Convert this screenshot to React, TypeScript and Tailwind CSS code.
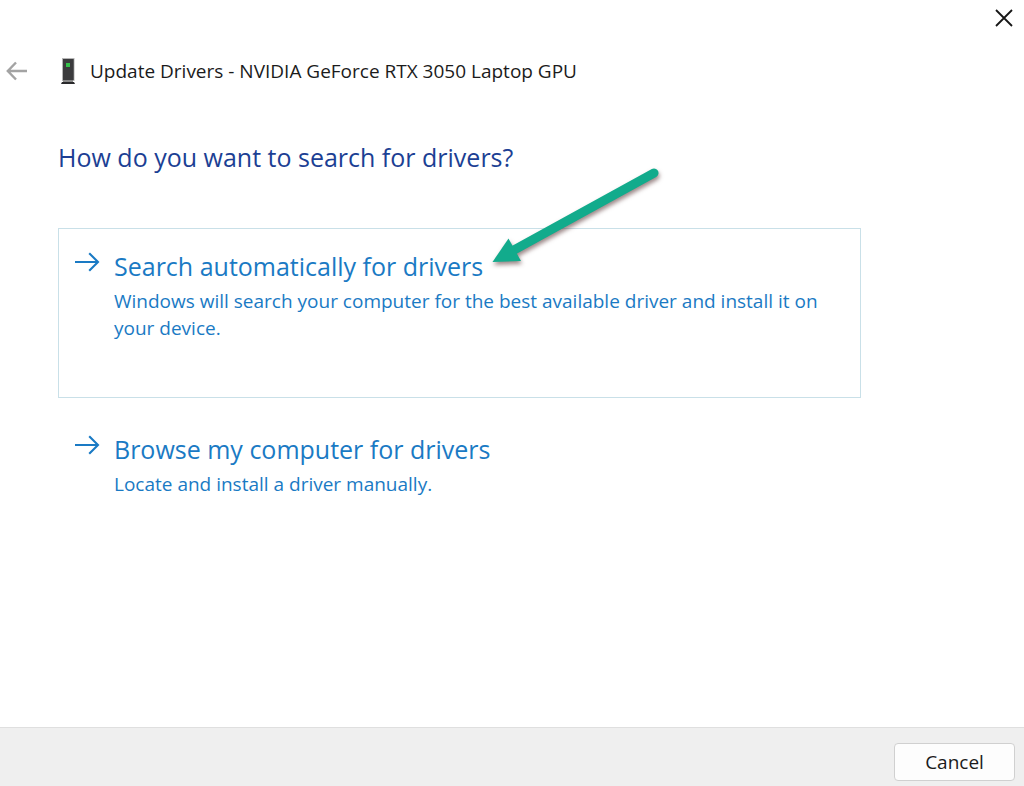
import React from "react";

function CommandArrow() {
  return (
    <svg className="mt-[5px] h-[22px] w-[26px] shrink-0" viewBox="0 0 26 22" fill="none" stroke="#1a7ac4" strokeWidth="2.1" aria-hidden="true">
      <path d="M1 11H24M15.2 2.200L24 11L15.200 19.800" />
    </svg>
  );
}

function DeviceIcon() {
  return (
    <svg className="h-[28px] w-[16px] shrink-0" viewBox="0 0 16 28" aria-hidden="true">
      <rect x="2" y="1" width="12.500" height="23" fill="#b5b5b5" />
      <rect x="3" y="2" width="10.700" height="21" fill="#3b3b3d" />
      <rect x="6" y="6" width="4" height="4" fill="#35c04a" />
      <rect x="3" y="23" width="10" height="2" fill="#888" />
      <path d="M2 25H14L15 27H1Z" fill="#29292b" />
    </svg>
  );
}

function CommandLink({ title, text, framed }: { title: string; text: string; framed?: boolean }) {
  return (
    <button
      type="button"
      className={
        framed
          ? "flex min-h-[170px] w-full items-start gap-[14px] border border-[#c9e0e8] px-[15px] pt-[17px] text-left text-[#1a7ac4]"
          : "flex w-full items-start gap-[14px] border border-transparent px-[15px] pt-[17px] text-left text-[#1a7ac4]"
      }
    >
      <CommandArrow />
      <span className="flex min-w-0 flex-col gap-[2px]">
        <span className="text-[25px] leading-[40px]">{title}</span>
        <span className="text-[19px] leading-[27px]">{text}</span>
      </span>
    </button>
  );
}

function PointerArrow() {
  return (
    <svg
      className="pointer-events-none absolute -top-[63px] left-[430px] h-[110px] w-[180px] drop-shadow-[1px_3px_2px_rgba(60,20,20,0.5)]"
      viewBox="488 165 180 110"
      aria-hidden="true"
    >
      <path d="M654 173L514 250" stroke="#12ab8c" strokeWidth="9" strokeLinecap="round" />
      <path d="M492.500 262L508.500 238.500L521 261Z" fill="#12ab8c" />
    </svg>
  );
}

export default function App() {
  return (
    <div className="flex min-h-screen flex-col bg-white font-['Open_Sans','Noto_Sans',sans-serif] text-[#1b1b1b]">
      <div className="flex h-[36px] items-center justify-end pr-[10px]">
        <button type="button" aria-label="Close">
          <svg className="size-[20px]" viewBox="0 0 20 20" fill="none" stroke="#161616" strokeWidth="1.8" aria-hidden="true">
            <path d="M2 2L18 18M18 2L2 18" />
          </svg>
        </button>
      </div>

      <header className="flex h-[70px] items-center pl-[6px]">
        <button type="button" aria-label="Back">
          <svg className="h-[20px] w-[22px]" viewBox="0 0 22 20" fill="none" stroke="#a3a3a3" strokeWidth="2.4" aria-hidden="true">
            <path d="M21 10H2M10 1.500L1.800 10L10 18.500" />
          </svg>
        </button>
        <span className="ml-[32px] flex items-center gap-[14px]">
          <DeviceIcon />
          <span className="text-[19px] leading-[28px]">Update Drivers - NVIDIA GeForce RTX 3050 Laptop GPU</span>
        </span>
      </header>

      <main className="flex-1 pr-[163px] pb-8 pl-[58px]">
        <h1 className="pt-[31px] text-[25px] leading-[40px] text-[#1c3f94]">How do you want to search for drivers?</h1>
        <div className="relative mt-[51px] flex flex-col gap-[13px]">
          <CommandLink
            framed
            title="Search automatically for drivers"
            text="Windows will search your computer for the best available driver and install it on your device."
          />
          <CommandLink title="Browse my computer for drivers" text="Locate and install a driver manually." />
          <PointerArrow />
        </div>
      </main>

      <footer className="flex justify-end border-t border-[#dfdfdf] bg-[#efefef] pt-[15px] pr-[9px] pb-[5px]">
        <button type="button" className="h-[38px] w-[121px] rounded-[4px] border border-[#d0d0d0] bg-[#fdfdfd] text-[19px] leading-[28px]">
          Cancel
        </button>
      </footer>
    </div>
  );
}
